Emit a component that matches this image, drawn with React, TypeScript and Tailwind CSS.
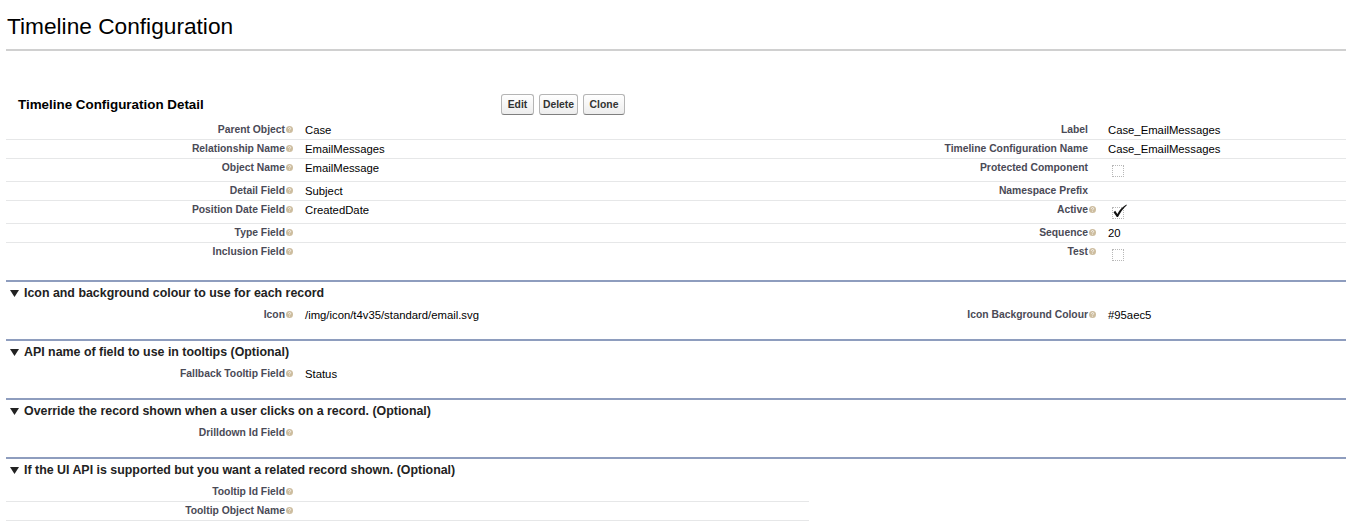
const sans = "font-['Liberation_Sans',Arial,sans-serif]"

function Help() {
  return (
    <svg width="7" height="7" viewBox="0 0 8 8" className="ml-px mt-[3px] shrink-0">
      <circle cx="4" cy="4" r="4" fill="#cdbd9f" />
      <path d="M2.7 3.1c0-.8.6-1.3 1.3-1.3s1.3.4 1.3 1.1c0 .9-1.3.9-1.3 1.8M4 5.4v1" fill="none" stroke="#fff" strokeWidth="0.9" />
    </svg>
  )
}

function Checkbox({ checked }: { checked?: boolean }) {
  return (
    <div className="relative ml-1 mt-1 h-3 w-3 border border-dotted border-[#b8b8b8]">
      {checked && (
        <svg width="16" height="14" viewBox="0 0 16 14" className="absolute -left-px -top-[4px]">
          <path d="M1.5 8.2 L3.2 6.8 L5.4 10 C7.6 6 10.4 3 14.4 0.6 L14.8 1.2 C11.2 4.4 8.4 8.4 6 13 L4.8 13 Z" fill="#111" />
        </svg>
      )}
    </div>
  )
}

function Label({ text, help = true, h }: { text: string; help?: boolean; h: string }) {
  return (
    <div className={`flex justify-end ${h} pt-[2px] pb-px`}>
      <span className="text-[10.35px] font-bold leading-[13px] text-[#4a4a56]">{text}</span>
      {help ? <Help /> : <span className="ml-px w-[7px]" />}
    </div>
  )
}

type Field = { label: string; value?: string; help?: boolean; box?: 'on' | 'off' }

function Cell({ f, h }: { f: Field; h: string }) {
  return (
    <>
      <Label text={f.label} help={f.help} h={h} />
      <div className="pl-3 pt-[2px] text-[11.3px] leading-[14px] text-black">
        {f.box ? <Checkbox checked={f.box === 'on'} /> : f.value}
      </div>
    </>
  )
}

function Row({ left, right, h = 'h-[18px]', last }: { left: Field; right: Field; h?: string; last?: boolean }) {
  return (
    <div className={`grid grid-cols-[287px_516px_287px_1fr] ${last ? '' : 'border-b border-[#e6e7e8]'}`}>
      <Cell f={left} h={h} />
      <Cell f={right} h={h} />
    </div>
  )
}

function SectionHead({ title }: { title: string }) {
  return (
    <div className="flex h-[26px] items-start border-t-2 border-[#8e9dbe] pt-[3px]">
      <svg width="9" height="7" viewBox="0 0 9 7" className="ml-1 mr-[5px] mt-[5px] shrink-0">
        <path d="M0 0 H9 L4.5 7 Z" fill="#222" />
      </svg>
      <h3 className="text-[12.4px] font-bold leading-4 text-[#222]">{title}</h3>
    </div>
  )
}

function Btn({ children, w }: { children: string; w: string }) {
  return (
    <button className={`${w} h-[21px] rounded-[3px] border border-[#b5b5b5] border-b-[#7f7f7f] bg-gradient-to-b from-white to-[#ededed] text-[10.4px] font-bold text-[#333]`}>
      {children}
    </button>
  )
}

export default function App() {
  return (
    <div className={`${sans} h-[521px] w-[1346px] overflow-hidden bg-white pl-[6px]`}>
      {/* Page title */}
      <div className="h-[51px] border-b-2 border-[#d0d0d0] pl-px pt-3">
        <h1 className="text-[22.7px] font-normal leading-7 text-black">Timeline Configuration</h1>
      </div>

      {/* Detail header */}
      <div className="mt-[43px] flex h-[27px] items-start">
        <h2 className="mt-[3px] w-[495px] pl-3 text-[13.4px] font-bold leading-4 text-black">Timeline Configuration Detail</h2>
        <div className="flex gap-[5px]">
          <Btn w="w-[33px]">Edit</Btn>
          <Btn w="w-[39px]">Delete</Btn>
          <Btn w="w-[42px]">Clone</Btn>
        </div>
      </div>

      <Row left={{ label: 'Parent Object', value: 'Case' }} right={{ label: 'Label', value: 'Case_EmailMessages', help: false }} />
      <Row left={{ label: 'Relationship Name', value: 'EmailMessages' }} right={{ label: 'Timeline Configuration Name', value: 'Case_EmailMessages', help: false }} />
      <Row h="h-[22px]" left={{ label: 'Object Name', value: 'EmailMessage' }} right={{ label: 'Protected Component', box: 'off', help: false }} />
      <Row left={{ label: 'Detail Field', value: 'Subject' }} right={{ label: 'Namespace Prefix', help: false }} />
      <Row h="h-[22px]" left={{ label: 'Position Date Field', value: 'CreatedDate' }} right={{ label: 'Active', box: 'on' }} />
      <Row left={{ label: 'Type Field' }} right={{ label: 'Sequence', value: '20' }} />
      <Row last h="h-[37px]" left={{ label: 'Inclusion Field' }} right={{ label: 'Test', box: 'off' }} />

      <SectionHead title="Icon and background colour to use for each record" />
      <Row last h="h-[33px]" left={{ label: 'Icon', value: '/img/icon/t4v35/standard/email.svg' }} right={{ label: 'Icon Background Colour', value: '#95aec5' }} />

      <SectionHead title="API name of field to use in tooltips (Optional)" />
      <Row last h="h-[33px]" left={{ label: 'Fallback Tooltip Field', value: 'Status' }} right={{ label: '', help: false }} />

      <SectionHead title="Override the record shown when a user clicks on a record. (Optional)" />
      <Row last h="h-[33px]" left={{ label: 'Drilldown Id Field' }} right={{ label: '', help: false }} />

      <SectionHead title="If the UI API is supported but you want a related record shown. (Optional)" />
      <div className="w-[803px]">
        <div className="grid grid-cols-[287px_1fr] border-b border-[#e6e7e8]">
          <Label text="Tooltip Id Field" h="h-[18px]" />
          <div />
        </div>
        <div className="grid grid-cols-[287px_1fr] border-b border-[#e6e7e8]">
          <Label text="Tooltip Object Name" h="h-[18px]" />
          <div />
        </div>
      </div>
    </div>
  )
}
